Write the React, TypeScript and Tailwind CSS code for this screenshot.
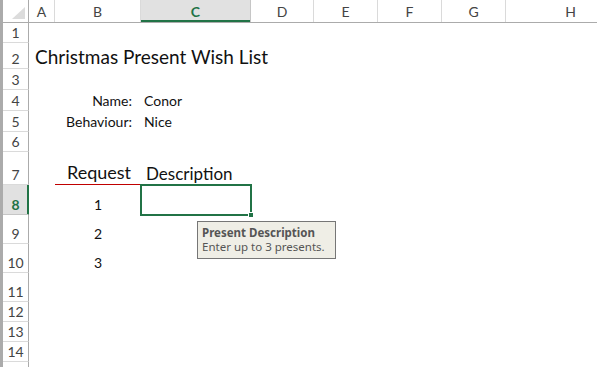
import type { ReactNode } from 'react'

type Col = { label: string; cls: string }

const COLS: Col[] = [
  { label: 'A', cls: 'w-[26px]' },
  { label: 'B', cls: 'w-[86px]' },
  { label: 'C', cls: 'w-[110px]' },
  { label: 'D', cls: 'w-[63px]' },
  { label: 'E', cls: 'w-[64px]' },
  { label: 'F', cls: 'w-[64px]' },
  { label: 'G', cls: 'w-[64px]' },
  { label: 'H', cls: 'w-[130px]' },
]

// row heights in px (grid line included)
const ROWS: { n: number; cls: string }[] = [
  { n: 1, cls: 'h-[20px]' },
  { n: 2, cls: 'h-[26px]' },
  { n: 3, cls: 'h-[21px]' },
  { n: 4, cls: 'h-[21px]' },
  { n: 5, cls: 'h-[21px]' },
  { n: 6, cls: 'h-[20px]' },
  { n: 7, cls: 'h-[33px]' },
  { n: 8, cls: 'h-[30px]' },
  { n: 9, cls: 'h-[29px]' },
  { n: 10, cls: 'h-[29px]' },
  { n: 11, cls: 'h-[29px]' },
  { n: 12, cls: 'h-[20px]' },
  { n: 13, cls: 'h-[20px]' },
  { n: 14, cls: 'h-[20px]' },
  { n: 15, cls: 'h-[20px]' },
]

const LAST_LABEL = 14
const SEL_COL = 'C'
const SEL_ROW = 8

// cell content; each cell is a bottom-aligned flex box like Excel's default
const CELLS: Record<string, { text: string; cls: string }> = {
  A2: { text: 'Christmas Present Wish List', cls: 'pl-[6px] pb-[3px] text-[19px] whitespace-nowrap' },
  B4: { text: 'Name:', cls: 'justify-end pr-[9px] pb-[3px] text-[14px]' },
  B5: { text: 'Behaviour:', cls: 'justify-end pr-[9px] pb-[3px] text-[14px]' },
  C4: { text: 'Conor', cls: 'pl-[3px] pb-[3px] text-[14px]' },
  C5: { text: 'Nice', cls: 'pl-[3px] pb-[3px] text-[14px]' },
  B7: { text: 'Request', cls: 'justify-end pr-[10px] pb-[3px] text-[18px] border-b border-[#c00000]' },
  C7: { text: 'Description', cls: 'pl-[5px] pb-[3px] text-[17px] whitespace-nowrap' },
  B8: { text: '1', cls: 'justify-center pb-[3px] text-[14px]' },
  B9: { text: '2', cls: 'justify-center pb-[3px] text-[14px]' },
  B10: { text: '3', cls: 'justify-center pb-[3px] text-[14px]' },
}

function Cell({ row, col, width }: { row: number; col: string; width: string }): ReactNode {
  const c = CELLS[`${col}${row}`]
  return (
    <div className={`${width} flex shrink-0 items-end leading-none ${c ? c.cls : ''}`}>{c?.text}</div>
  )
}

export default function App() {
  return (
    <div
      className="relative flex h-[367px] w-[597px] overflow-hidden bg-white text-[#111]"
      style={{ fontFamily: 'Lato, "Liberation Sans", sans-serif' }}
    >
      <div className="w-[3px] shrink-0 bg-[#ababab]" />
      <div className="flex flex-col">
        {/* column header */}
        <div className="flex h-[23px] shrink-0 border-b border-[#ababab]">
          <div className="flex w-[26px] shrink-0 items-end justify-end border-r border-[#ababab] pr-[3px] pb-[3px]">
            <svg width="13" height="12" viewBox="0 0 13 12">
              <polygon points="13,0 13,12 0,12" fill="#dcdcdc" />
            </svg>
          </div>
          {COLS.map((c) => {
            const sel = c.label === SEL_COL
            return (
              <div
                key={c.label}
                className={`${c.cls} flex shrink-0 items-center justify-center border-r text-[14px] ${
                  sel
                    ? 'border-[#c6c6c6] bg-[#e1e1e1] font-bold text-[#217346] shadow-[inset_0_-2px_0_#217346]'
                    : 'border-[#dadada] text-[#444]'
                }`}
              >
                {c.label}
              </div>
            )
          })}
        </div>
        {/* body rows */}
        {ROWS.map((r) => {
          const selRow = r.n === SEL_ROW
          return (
            <div key={r.n} className={`${r.cls} flex shrink-0`}>
              <div
                className={`flex w-[26px] shrink-0 items-end justify-center border-b border-r pb-[1px] text-[14px] leading-[16px] ${
                  selRow
                    ? 'border-b-[#c6c6c6] border-r-[#217346] bg-[#e1e1e1] font-bold text-[#217346] shadow-[inset_-1px_0_0_#217346]'
                    : 'border-b-[#dadada] border-r-[#ababab] text-[#444]'
                }`}
              >
                {r.n <= LAST_LABEL ? r.n : ''}
              </div>
              {COLS.map((c) => (
                <Cell key={c.label} row={r.n} col={c.label} width={c.cls} />
              ))}
            </div>
          )
        })}
      </div>

      {/* selected cell C8 */}
      <div className="absolute left-[140px] top-[184px] h-[32px] w-[112px] border-2 border-[#217346]" />
      <div className="absolute left-[248px] top-[212px] h-[6px] w-[6px] border border-white bg-[#217346]" />

      {/* input message tooltip */}
      <div
        className="absolute left-[197px] top-[221px] flex h-[38px] w-[139px] flex-col border border-[#767676] bg-[#efeee6] px-[4px] pt-[4px] text-[11.5px] leading-[14px] text-[#555]"
        style={{ fontFamily: '"Noto Sans", "DejaVu Sans", sans-serif' }}
      >
        <div className="font-bold">Present Description</div>
        <div>Enter up to 3 presents.</div>
      </div>
    </div>
  )
}
